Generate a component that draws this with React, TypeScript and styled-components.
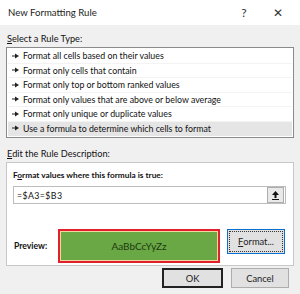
import React from "react";
import styled, { createGlobalStyle } from "styled-components";

const Global = createGlobalStyle`
  html, body {
    margin: 0;
    padding: 0;
    background: #f0f0f0;
  }
  body {
    font-family: "Lato", "Noto Sans", sans-serif;
    font-size: 8.8px;
    color: #111;
  }
`;

const Dialog = styled.div`
  width: 300px;
  height: 294px;
  display: flex;
  flex-direction: column;
  background: #f0f0f0;
  overflow: hidden;
`;

const TitleBar = styled.div`
  height: 25px;
  flex: none;
  background: #fff;
  display: flex;
  align-items: center;
  padding: 0 0 0 8px;
  font-size: 9.6px;
  color: #222;
`;

const Title = styled.div`
  flex: 1;
`;

const TitleButton = styled.div<{ $w: number }>`
  width: ${(p) => p.$w}px;
  text-align: center;
  font-size: 12px;
  color: #333;
`;

const Body = styled.div`
  padding: 7px 6px 0 6px;
  display: flex;
  flex-direction: column;
`;

const Label = styled.div`
  padding-left: 1px;
  height: 14px;
  line-height: 14px;
  margin-bottom: 1px;
  font-size: 9.2px;
`;

const U = styled.span`
  text-decoration: underline;
  text-underline-offset: 1px;
`;

const RuleList = styled.div`
  border: 1px solid #8a8a8a;
  background: #fff;
  padding: 1px;
  display: flex;
  flex-direction: column;
  margin-bottom: 9px;
`;

const Rule = styled.div<{ $sel?: boolean }>`
  height: 13.5px;
  line-height: 13px;
  padding-left: 4px;
  background: ${(p) => (p.$sel ? "#e5e5e5" : "#fff")};
  border-bottom: 1px solid ${(p) => (p.$sel ? "#e5e5e5" : "#f3f3f3")};
  white-space: nowrap;
  display: flex;
  align-items: center;
  gap: 4px;
`;

const DescBox = styled.div`
  box-sizing: border-box;
  border: 1px solid #c8c8c8;
  background: #fff;
  height: 104px;
  display: flex;
  flex-direction: column;
  padding: 5px 7px 0 6px;
`;

const Bold = styled.div`
  font-weight: 700;
  font-size: 8.3px;
  height: 15px;
  line-height: 15px;
  margin-bottom: 3px;
`;

const InputRow = styled.div`
  height: 16px;
  border: 1px solid #bdbdbd;
  display: flex;
  align-items: center;
`;

const InputText = styled.div`
  flex: 1;
  padding-left: 3px;
  letter-spacing: 0.4px;
`;

const RefButton = styled.div`
  width: 15px;
  height: 14px;
  margin-right: 1px;
  border: 1px solid #adadad;
  background: #e9e9e9;
  display: flex;
  align-items: center;
  justify-content: center;
`;

const PreviewRow = styled.div`
  margin-top: 25px;
  display: flex;
  align-items: flex-start;
`;

const PreviewLabel = styled.div`
  font-weight: 700;
  font-size: 8.6px;
  width: 44px;
  align-self: center;
  padding-left: 1px;
`;

const Swatch = styled.div`
  width: 158px;
  height: 30px;
  border: 2px solid #e0202c;
  box-shadow: inset 0 0 0 1px #f2d6a0;
  background: #6aa845;
  display: flex;
  align-items: center;
  justify-content: center;
  font-size: 10px;
  color: #1d3a10;
`;

const Button = styled.div<{ $focus?: boolean; $default?: boolean }>`
  box-sizing: border-box;
  display: flex;
  align-items: center;
  justify-content: center;
  background: #e1e1e1;
  border: ${(p) =>
    p.$default ? "2px solid #222" : p.$focus ? "1px solid #0b6fd0" : "1px solid #adadad"};
  outline: ${(p) => (p.$focus ? "1px dotted #333" : "none")};
  outline-offset: -3px;
  color: #222;
  font-size: 9.3px;
`;

const FormatBtn = styled(Button)`
  width: 58px;
  height: 25px;
  margin-left: 7px;
`;

const Footer = styled.div`
  display: flex;
  justify-content: flex-end;
  gap: 8px;
  padding: 2px 5px 0 0;
`;

const FooterBtn = styled(Button)<{ $w: number }>`
  width: ${(p) => p.$w}px;
  height: 20px;
`;

const RuleArrow = () => (
  <svg width="7" height="6" viewBox="0 0 7 6">
    <path d="M0 2.5 H3 V0.5 L7 3 L3 5.5 V3.5 H0 Z" fill="#222" />
  </svg>
);

const rules = [
  "Format all cells based on their values",
  "Format only cells that contain",
  "Format only top or bottom ranked values",
  "Format only values that are above or below average",
  "Format only unique or duplicate values",
  "Use a formula to determine which cells to format",
];

export default function App() {
  return (
    <Dialog>
      <Global />
      <TitleBar>
        <Title>New Formatting Rule</Title>
        <TitleButton $w={24}>?</TitleButton>
        <TitleButton $w={44}>✕</TitleButton>
      </TitleBar>
      <Body>
        <Label>
          <U>S</U>elect a Rule Type:
        </Label>
        <RuleList>
          {rules.map((r, i) => (
            <Rule key={r} $sel={i === rules.length - 1}>
              <RuleArrow />
              {r}
            </Rule>
          ))}
        </RuleList>
        <Label>
          <U>E</U>dit the Rule Description:
        </Label>
        <DescBox>
          <Bold>
            F<U>o</U>rmat values where this formula is true:
          </Bold>
          <InputRow>
            <InputText>=$A3=$B3</InputText>
            <RefButton>
              <svg width="9" height="10" viewBox="0 0 9 10">
                <path d="M4.5 1 L8 5 H5.5 V8 H3.5 V5 H1 Z" fill="#111" />
                <rect x="1" y="9" width="7" height="1" fill="#111" />
              </svg>
            </RefButton>
          </InputRow>
          <PreviewRow>
            <PreviewLabel>Preview:</PreviewLabel>
            <Swatch>AaBbCcYyZz</Swatch>
            <FormatBtn $focus>
              <U>F</U>ormat...
            </FormatBtn>
          </PreviewRow>
        </DescBox>
        <Footer>
          <FooterBtn $default $w={61}>OK</FooterBtn>
          <FooterBtn $w={58}>Cancel</FooterBtn>
        </Footer>
      </Body>
    </Dialog>
  );
}
